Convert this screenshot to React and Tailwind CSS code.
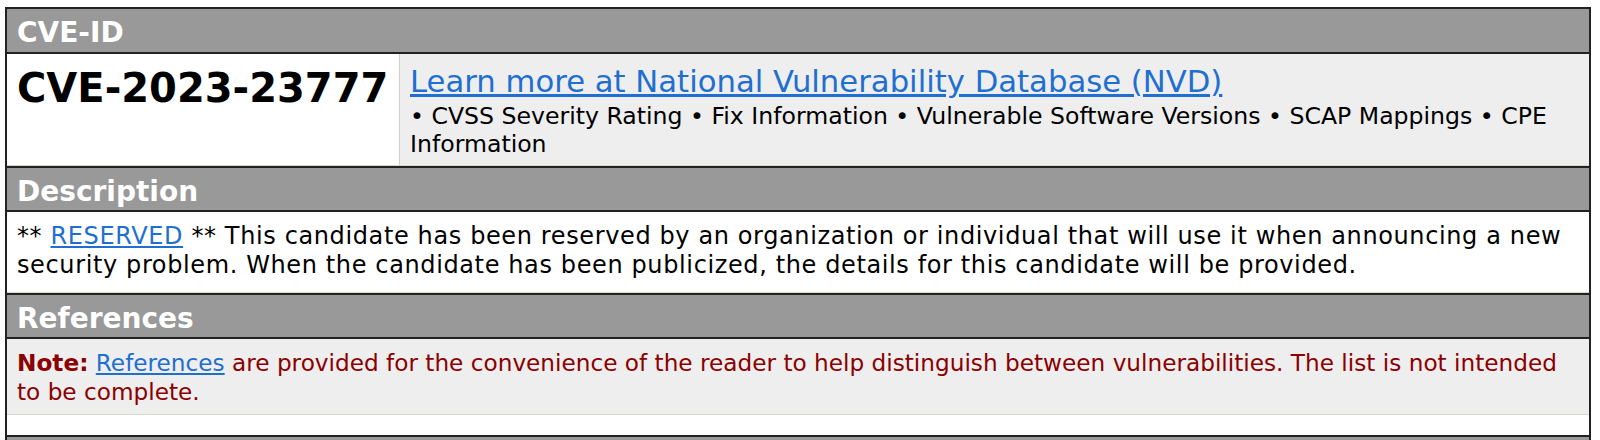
import React from "react";

const Header = ({ title, first }) => (
  <div
    className={
      "bg-[#999999] border-b-2 border-[#222222] pl-[10px] pt-[8px] text-[28px] leading-[32px] font-bold text-white " +
      (first ? "h-[45px]" : "h-[46px] border-t-2")
    }
  >
    {title}
  </div>
);

const App = () => {
  return (
    <div
      className="bg-white w-[1600px] h-[440px] overflow-hidden pt-[7px] pl-[5px]"
      style={{ fontFamily: '"DejaVu Sans", Verdana, sans-serif' }}
    >
      <div className="w-[1586px] border-2 border-b-0 border-[#222222] text-black">
        <Header title="CVE-ID" first />

        <div className="flex h-[112px] border-b border-[#dad6ce]">
          <div className="w-[393px] bg-white border-r border-[#cfcfcf] pl-[10px] pt-[10px] text-[40px] leading-[48px] font-bold">
            CVE-2023-23777
          </div>
          <div className="flex-1 bg-[#eeeeee] pl-[10px] pr-[10px] pt-[8px]">
            <div className="text-[30.7px] leading-[40px]">
              <a href="#" className="text-[#1f6fd1] underline">
                Learn more at National Vulnerability Database (NVD)
              </a>
            </div>
            <div className="text-[23.6px] leading-[28px]">
              • CVSS Severity Rating • Fix Information • Vulnerable Software
              Versions • SCAP Mappings • CPE Information
            </div>
          </div>
        </div>

        <Header title="Description" />

        <div className="h-[81px] bg-white border-b border-[#dad6ce] pl-[10px] pr-[10px] pt-[10px] text-[24px] leading-[29px] tracking-[0.62px]">
          **{" "}
          <a href="#" className="text-[#1f6fd1] underline">
            RESERVED
          </a>{" "}
          ** This candidate has been reserved by an organization or individual
          that will use it when announcing a new security problem. When the
          candidate has been publicized, the details for this candidate will be
          provided.
        </div>

        <Header title="References" />

        <div className="h-[76px] bg-[#eeeeee] border-b border-[#dad6ce] pl-[10px] pr-[10px] pt-[9px] text-[23.2px] leading-[29px] text-[#8b0000]">
          <b>Note:</b>{" "}
          <a href="#" className="text-[#1f6fd1] underline">
            References
          </a>{" "}
          are provided for the convenience of the reader to help distinguish
          between vulnerabilities. The list is not intended to be complete.
        </div>

        <div className="h-[20px] bg-white" />

        <div className="h-[20px] bg-[#999999] border-t-2 border-[#222222]" />
      </div>
    </div>
  );
};

export default App;
